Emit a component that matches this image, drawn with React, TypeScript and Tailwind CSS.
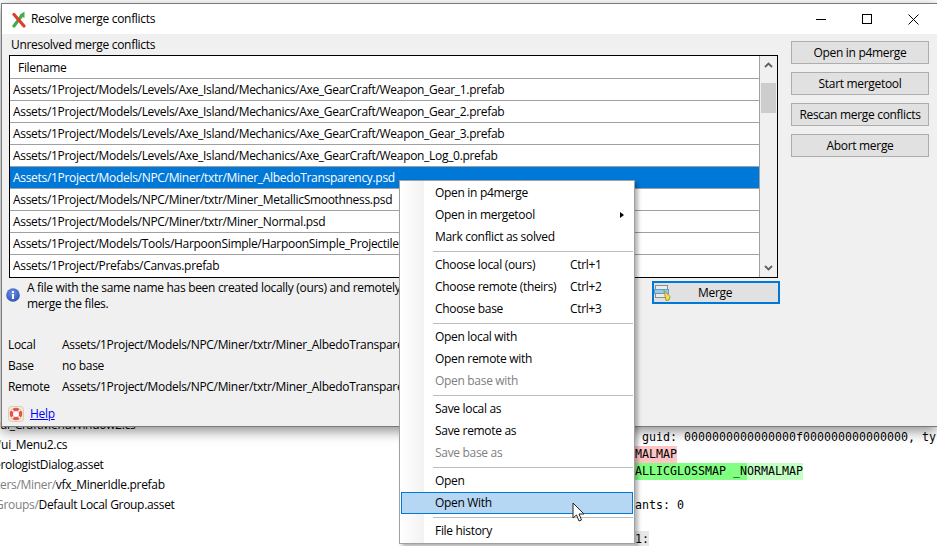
const font = "font-['Open_Sans','Noto_Sans',sans-serif] text-[12px] tracking-[-0.31px]";

const files = [
  "Assets/1Project/Models/Levels/Axe_Island/Mechanics/Axe_GearCraft/Weapon_Gear_1.prefab",
  "Assets/1Project/Models/Levels/Axe_Island/Mechanics/Axe_GearCraft/Weapon_Gear_2.prefab",
  "Assets/1Project/Models/Levels/Axe_Island/Mechanics/Axe_GearCraft/Weapon_Gear_3.prefab",
  "Assets/1Project/Models/Levels/Axe_Island/Mechanics/Axe_GearCraft/Weapon_Log_0.prefab",
  "Assets/1Project/Models/NPC/Miner/txtr/Miner_AlbedoTransparency.psd",
  "Assets/1Project/Models/NPC/Miner/txtr/Miner_MetallicSmoothness.psd",
  "Assets/1Project/Models/NPC/Miner/txtr/Miner_Normal.psd",
  "Assets/1Project/Models/Tools/HarpoonSimple/HarpoonSimple_Projectile.prefab",
  "Assets/1Project/Prefabs/Canvas.prefab",
];

const sideButtons = ["Open in p4merge", "Start mergetool", "Rescan merge conflicts", "Abort merge"];

type MenuEntry = { label?: string; shortcut?: string; disabled?: boolean; arrow?: boolean; active?: boolean };

const menuEntries: MenuEntry[] = [
  { label: "Open in p4merge" },
  { label: "Open in mergetool", arrow: true },
  { label: "Mark conflict as solved" },
  {},
  { label: "Choose local (ours)", shortcut: "Ctrl+1" },
  { label: "Choose remote (theirs)", shortcut: "Ctrl+2" },
  { label: "Choose base", shortcut: "Ctrl+3" },
  {},
  { label: "Open local with" },
  { label: "Open remote with" },
  { label: "Open base with", disabled: true },
  {},
  { label: "Save local as" },
  { label: "Save remote as" },
  { label: "Save base as", disabled: true },
  {},
  { label: "Open" },
  { label: "Open With", active: true },
  {},
  { label: "File history" },
];

function AppIcon() {
  return (
    <svg width="16" height="17" viewBox="0 0 16 17" className="shrink-0">
      <path d="M3 15 L10.5 5" stroke="#3fae4a" strokeWidth="3.2" strokeLinecap="round" fill="none" />
      <path d="M8.5 4 L13.5 0.5 L13.5 7 Z" fill="#3fae4a" />
      <path d="M3 3.5 L13 15" stroke="#dc3f30" strokeWidth="3.2" strokeLinecap="round" fill="none" />
    </svg>
  );
}

function InfoIcon() {
  return (
    <svg width="14" height="14" viewBox="0 0 14 14" className="shrink-0">
      <defs>
        <radialGradient id="infoFill" cx="45%" cy="35%" r="70%">
          <stop offset="0%" stopColor="#6f93e6" />
          <stop offset="100%" stopColor="#2a4fb0" />
        </radialGradient>
      </defs>
      <circle cx="7" cy="7" r="6.8" fill="url(#infoFill)" />
      <rect x="6" y="3" width="2" height="2" fill="#fff" />
      <rect x="6" y="6" width="2" height="5" fill="#fff" />
    </svg>
  );
}

function HelpIcon() {
  return (
    <svg width="16" height="16" viewBox="0 0 16 16" className="shrink-0">
      <rect x="0.5" y="0.5" width="15" height="15" rx="3" fill="#f5ead6" stroke="#dccdb0" />
      <circle cx="8" cy="8" r="4.6" fill="#fff" stroke="#e2534c" strokeWidth="3.2" />
      <path d="M3.6 3.6 L5.7 5.7 M12.4 3.6 L10.3 5.7 M3.6 12.4 L5.7 10.3 M12.4 12.4 L10.3 10.3" stroke="#fbe3df" strokeWidth="1.8" />
    </svg>
  );
}

function MergeIcon() {
  return (
    <svg width="17" height="16" viewBox="0 0 17 16" className="shrink-0">
      <rect x="1.5" y="0.5" width="12" height="4" fill="#ececec" stroke="#8c8c8c" />
      <rect x="0.5" y="4.5" width="14" height="4" fill="#8ccdf0" stroke="#5aa0cc" />
      <rect x="1.5" y="8.5" width="12" height="4" fill="#ececec" stroke="#8c8c8c" />
      <path d="M10 5.5 L16 11.5 L15 15 L12 15.5 Z" fill="#f6e04a" stroke="#8a7a20" strokeWidth="0.7" />
    </svg>
  );
}

function Cursor() {
  return (
    <svg width="14" height="22" viewBox="0 0 14 22" className="absolute left-[572px] top-[502px]">
      <path d="M1 1 L1 16 L4.5 13 L7 19 L9.5 18 L7 12 L12 12 Z" fill="#fff" stroke="#222" strokeWidth="1" />
    </svg>
  );
}

function ContextMenu() {
  return (
    <div className={`absolute left-[399px] top-[180px] w-[236px] border border-[#a0a0a0] bg-white px-px py-px text-black shadow-[3px_3px_4px_rgba(0,0,0,0.3)] ${font}`}>
      <div className="absolute bottom-0 left-0 top-0 w-[24px] bg-gradient-to-r from-white to-[#f2f2f2]" />
      {menuEntries.map((entry, i) =>
        entry.label ? (
          <div
            key={i}
            className={`relative flex h-[22px] items-center ${entry.active ? "border border-[#0078d7] bg-[#b5d7f3] pl-[33px]" : "pl-[34px]"} ${entry.disabled ? "text-[#808080]" : ""}`}
          >
            <span className="w-[135px] whitespace-nowrap">{entry.label}</span>
            {entry.shortcut && <span>{entry.shortcut}</span>}
            {entry.arrow && <span className="absolute left-[219px] top-[7.5px] h-0 w-0 border-y-[3.5px] border-l-[4px] border-y-transparent border-l-black" />}
          </div>
        ) : (
          <div key={i} className="relative flex h-[6px] items-center pl-[32px]">
            <div className="h-px w-full bg-[#bdbdbd]" />
          </div>
        )
      )}
    </div>
  );
}

function Dialog() {
  return (
    <div className={`absolute left-[1px] top-[3px] flex h-[424px] w-[936px] flex-col border-b border-l border-t border-[#7a7a7a] bg-[#f0f0f0] text-black shadow-[0_4px_12px_rgba(0,0,0,0.45)] ${font}`}>
      <div className="flex h-[30px] items-center bg-white pl-[9px]">
        <AppIcon />
        <span className="ml-[4px]">Resolve merge conflicts</span>
        <div className="ml-auto flex h-full pr-px">
          <div className="flex w-[46px] items-center justify-center">
            <div className="h-px w-[10px] bg-black" />
          </div>
          <div className="flex w-[46px] items-center justify-center">
            <div className="h-[10px] w-[10px] border border-black" />
          </div>
          <div className="flex w-[46px] items-center justify-center">
            <svg width="11" height="11" viewBox="0 0 11 11"><path d="M0.5 0.5 L10.5 10.5 M10.5 0.5 L0.5 10.5" stroke="#000" /></svg>
          </div>
        </div>
      </div>
      <div className="flex flex-1 pl-[4px] pr-[8px] pt-[2px]">
        <div className="flex w-[774px] flex-col">
          <div className="ml-[5px]">Unresolved merge conflicts</div>
          <div className="ml-[3px] mt-px flex h-[223px] w-[769px] border border-black bg-white">
            <div className="flex-1 pt-px">
              <div className="flex h-[22px] items-center border-b border-[#a0a0a0] pl-[8px]">Filename</div>
              {files.map((f, i) => (
                <div
                  key={f}
                  className={`flex h-[22px] items-center border-b border-[#a0a0a0] pl-[3px] last:border-b-0 ${i === 4 ? "bg-[#0078d7] text-white" : ""}`}
                >
                  {f}
                </div>
              ))}
            </div>
            <div className="flex w-[18px] flex-col items-center border-l border-[#a0a0a0] bg-[#f0f0f0]">
              <svg width="9" height="6" viewBox="0 0 9 6" className="mt-[6px]"><path d="M1 5 L4.5 1.5 L8 5" stroke="#606060" strokeWidth="1.8" fill="none" /></svg>
              <div className="mt-[15px] h-[30px] w-[15px] bg-[#cdcdcd]" />
              <svg width="9" height="6" viewBox="0 0 9 6" className="mb-[6px] mt-auto"><path d="M1 1 L4.5 4.5 L8 1" stroke="#606060" strokeWidth="1.8" fill="none" /></svg>
            </div>
          </div>
          <div className="flex h-[33px]">
            <div className="mt-[10px]"><InfoIcon /></div>
            <div className="ml-[7px] pt-[2px] leading-[16px]">
              A file with the same name has been created locally (ours) and remotely
              <br />
              merge the files.
            </div>
            <div className="ml-auto mt-[3px] flex h-[23px] w-[128px] items-center border-2 border-[#0078d7] bg-[#e1e1e1]">
              <MergeIcon />
              <span className="ml-[27px]">Merge</span>
            </div>
          </div>
          <div className="mt-[23px] grid grid-cols-[54px_1fr] pl-[2px] [&>span]:flex [&>span]:h-[21px] [&>span]:items-center [&>span]:whitespace-nowrap">
            <span>Local</span><span>Assets/1Project/Models/NPC/Miner/txtr/Miner_AlbedoTransparency.psd</span>
            <span>Base</span><span>no base</span>
            <span>Remote</span><span>Assets/1Project/Models/NPC/Miner/txtr/Miner_AlbedoTransparency.psd</span>
          </div>
          <div className="mt-[8px] flex items-center pl-[2px]">
            <HelpIcon />
            <span className="ml-[6px] text-[#0000ff] underline">Help</span>
          </div>
        </div>
        <div className="ml-[11px] flex flex-1 flex-col gap-[8px] pt-[5px]">
          {sideButtons.map((b) => (
            <div key={b} className="flex h-[23px] items-center justify-center border border-[#adadad] bg-[#e1e1e1]">{b}</div>
          ))}
        </div>
      </div>
    </div>
  );
}

function BackgroundWindow() {
  return (
    <div className="flex h-full pt-[415px]">
      <div className={`w-[635px] shrink-0 text-black ${font}`}>
        {[
          <>ui_CraftMenuWindow2.cs</>,
          <><span className="-ml-[3px] text-[#808080]">/</span>ui_Menu2.cs</>,
          <span className="-ml-[6px]">erologistDialog.asset</span>,
          <span className="-ml-[4px]"><span className="text-[#808080]">ters/Miner/</span>vfx_MinerIdle.prefab</span>,
          <span className="-ml-[5px]"><span className="text-[#808080]">Groups/</span>Default Local Group.asset</span>,
        ].map((row, i) => (
          <div key={i} className="flex h-[20px] items-center whitespace-nowrap">{row}</div>
        ))}
      </div>
      <div className="flex-1 pt-[14px] font-['DejaVu_Sans_Mono',monospace] text-[11.63px] leading-[17px] text-black">
        <div className="h-[17px] whitespace-nowrap pl-[7px]">guid: 0000000000000000f000000000000000, ty</div>
        <div className="h-[17px]"><span className="inline-block bg-[#ffc4c4]">MALMAP</span></div>
        <div className="flex h-[17px]"><span className="bg-[#80ff80]">ALLICGLOSSMAP _N</span><span className="bg-[#c4ffc4]">ORMALMAP</span></div>
        <div className="h-[17px]" />
        <div className="h-[17px]">ants: 0</div>
        <div className="h-[17px]" />
        <div className="h-[17px]"><span className="inline-block bg-[#e8e8e8]">1:</span></div>
      </div>
    </div>
  );
}

export default function App() {
  return (
    <div className="relative h-[546px] w-[937px] overflow-hidden bg-white">
      <BackgroundWindow />
      <Dialog />
      <ContextMenu />
      <Cursor />
    </div>
  );
}
